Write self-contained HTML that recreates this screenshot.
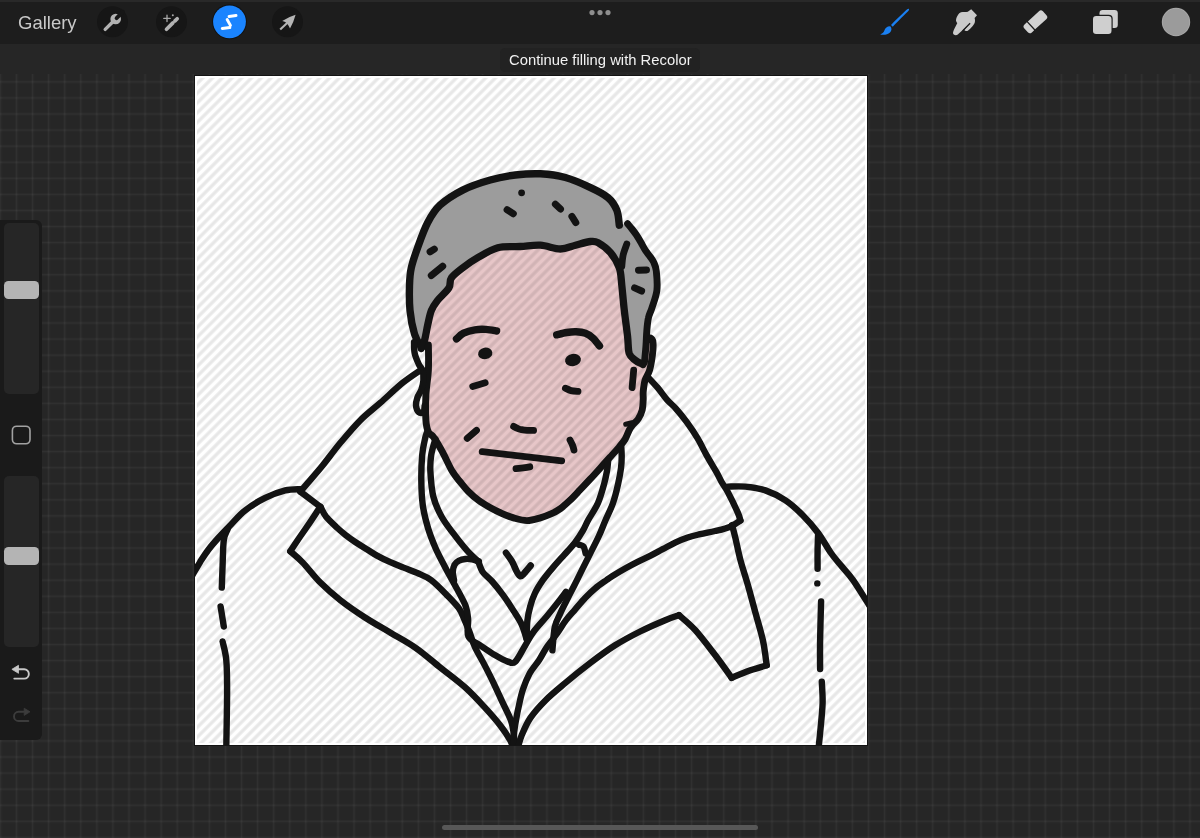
<!DOCTYPE html>
<html><head><meta charset="utf-8">
<style>
html,body{margin:0;padding:0;}
body{width:1200px;height:838px;overflow:hidden;background:#262626;position:relative;font-family:"Liberation Sans",sans-serif;}
#topbar{position:absolute;left:0;top:0;width:1200px;height:44px;background:#1d1d1d;}
#gallery{will-change:transform;position:absolute;left:17.7px;top:11.6px;font-size:18.5px;line-height:22px;color:#c9c9c9;}
#tip{position:absolute;left:500px;top:48px;width:200px;height:24px;border-radius:5px;background:#222222;color:#f2f2f2;font-size:14.8px;line-height:25.6px;text-align:center;}
#side{position:absolute;left:-6px;top:220px;width:48px;height:520px;border-radius:6px;background:#1a1a1a;}
.track{position:absolute;left:4px;width:34.5px;border-radius:5px;background:#262626;}
.knob{position:absolute;left:4px;width:34.5px;height:17.5px;border-radius:4.5px;background:#b4b4b4;}
#homebar{position:absolute;left:442px;top:825px;width:316px;height:5px;border-radius:3px;background:#575757;}
svg{position:absolute;left:0;top:0;}
</style></head><body>
<svg width="1200" height="838" viewBox="0 0 1200 838">
<defs><pattern id="gp" x="-1.075" y="80.4" width="16.075" height="16.075" patternUnits="userSpaceOnUse">
<rect x="0" y="0" width="3" height="16.075" fill="#fff" fill-opacity="0.014"/><rect x="1" y="0" width="1" height="16.075" fill="#fff" fill-opacity="0.03"/>
<rect x="0" y="0" width="16.075" height="3" fill="#fff" fill-opacity="0.014"/><rect x="0" y="1" width="16.075" height="1" fill="#fff" fill-opacity="0.03"/></pattern></defs>
<rect x="0" y="74" width="1200" height="764" fill="url(#gp)"/>
</svg>
<div id="topbar"></div><div style="position:absolute;left:0;top:0;width:1200px;height:1.5px;background:#292929"></div>
<div id="gallery">Gallery</div>
<div id="tip"><span style="will-change:transform;display:inline-block">Continue filling with Recolor</span></div>
<div id="side"></div>
<div class="track" style="top:222.5px;height:171.5px"></div>
<div class="knob" style="top:281px"></div>
<div class="track" style="top:476px;height:171px"></div>
<div class="knob" style="top:547px"></div>
<div id="homebar"></div>
<svg width="1200" height="838" viewBox="0 0 1200 838">
<defs>
<linearGradient id="sg" x1="0" y1="0" x2="0" y2="1">
<stop offset="0" stop-color="#000" stop-opacity="0.094"/><stop offset="0.14" stop-color="#000" stop-opacity="0.094"/><stop offset="0.36" stop-color="#000" stop-opacity="0"/><stop offset="0.64" stop-color="#000" stop-opacity="0"/><stop offset="0.86" stop-color="#000" stop-opacity="0.094"/><stop offset="1" stop-color="#000" stop-opacity="0.094"/></linearGradient>
<pattern id="st" width="20" height="6.9" patternUnits="userSpaceOnUse" patternTransform="translate(195 76) rotate(-45) translate(0 -0.1)">
<rect x="0" y="0" width="20" height="6.9" fill="url(#sg)"/></pattern>
<clipPath id="cv"><rect x="195" y="76" width="672" height="669"/></clipPath>
</defs>
<rect x="194" y="75" width="674" height="671" fill="#141414"/>
<rect x="195" y="76" width="672" height="669" fill="#ffffff"/>
<g clip-path="url(#cv)">
<path d="M421.3 348.5C421.8 347.2 423.4 344.4 424.5 340.5C425.6 336.6 426.5 330.4 427.6 325.4C428.8 320.4 429.7 314.6 431.4 310.4C433.1 306.2 434.7 304.2 437.6 300.4C440.5 296.6 446.6 291.6 448.9 287.8C451.2 284.0 449.1 281.1 451.4 277.8C453.7 274.5 458.3 271.2 462.7 267.8C467.1 264.4 471.8 261.1 477.7 257.7C483.6 254.3 490.7 249.6 497.8 247.7C504.9 245.8 513.2 246.9 520.3 246.5C527.4 246.1 533.7 244.8 540.4 245.2C547.1 245.6 554.5 249.0 560.4 249.0C566.2 249.0 570.5 246.4 575.5 245.2C580.5 243.9 586.8 241.9 590.5 241.5C594.2 241.1 594.7 240.8 598.0 242.7C601.3 244.6 607.0 248.5 610.5 252.7C614.0 256.9 617.4 262.4 619.3 267.8C621.2 273.2 621.0 278.2 621.8 285.3C622.6 292.4 623.3 301.8 624.3 310.4C625.3 319.0 626.8 329.5 627.6 336.7C628.4 343.9 628.0 349.5 629.2 353.4C630.5 357.3 632.8 358.2 635.1 360.1C637.4 362.0 641.7 363.8 643.0 364.5L643.0 364.5C643.5 362.1 645.2 354.1 646.0 350.0C646.8 345.9 647.3 341.8 647.6 340.1L647.6 340.1C648.1 339.8 649.5 337.6 650.4 338.0C651.3 338.4 652.7 339.6 653.0 342.5C653.3 345.4 653.0 350.5 652.4 355.1C651.8 359.7 650.8 365.9 649.6 370.1C648.4 374.3 646.2 376.5 645.1 380.1C644.0 383.8 643.5 388.7 643.2 392.0C642.9 395.3 643.4 397.0 643.2 400.0C643.0 403.0 643.0 406.8 642.2 410.0C641.4 413.2 639.8 416.5 638.2 419.0C636.6 421.5 634.0 423.2 632.5 425.1C631.0 427.0 630.4 427.8 629.2 430.1C628.0 432.4 626.9 436.3 625.2 439.1C623.5 441.9 621.6 444.1 619.1 447.1C616.6 450.1 613.3 453.6 610.1 457.1C606.9 460.6 603.4 464.5 600.1 468.2C596.8 471.9 593.5 475.6 590.1 479.2C586.8 482.8 583.4 486.3 580.0 489.9C576.6 493.5 573.0 497.5 569.7 500.6C566.4 503.7 563.5 506.4 560.4 508.6C557.3 510.8 554.4 512.4 551.0 513.9C547.6 515.4 544.3 516.8 540.3 517.9C536.3 519.0 531.5 520.6 527.0 520.6C522.5 520.6 517.8 519.1 513.6 517.9C509.4 516.7 505.6 515.1 501.6 513.3C497.6 511.5 493.3 509.3 489.5 507.2C485.7 505.1 482.4 503.3 478.8 500.6C475.2 497.9 471.2 494.3 468.1 491.2C465.0 488.1 462.8 485.1 460.1 481.8C457.4 478.5 455.0 476.0 452.1 471.1C449.2 466.2 445.7 458.0 442.7 452.4C439.7 446.8 436.4 441.1 434.0 437.7C431.6 434.3 429.8 434.8 428.4 431.9C427.0 429.0 426.3 426.3 425.9 420.2C425.5 414.1 425.5 403.5 425.9 395.1C426.3 386.7 428.0 378.4 428.4 370.0C428.8 361.6 428.4 349.2 428.4 345.0Z" fill="#e7c6c8"/>
<rect x="197" y="78" width="668" height="665" fill="url(#st)"/>
<path d="M421.3 347.5C420.2 345.2 416.4 340.2 414.5 334.0C412.6 327.8 410.8 318.5 410.0 310.4C409.2 302.3 409.3 292.4 409.5 285.3C409.7 278.2 409.9 274.1 411.3 267.8C412.7 261.5 414.9 255.2 417.6 247.7C420.3 240.2 423.9 229.8 427.6 222.7C431.4 215.6 434.2 210.5 440.1 205.1C446.0 199.7 454.4 194.3 462.7 190.1C471.0 185.9 481.4 182.5 490.2 180.0C499.0 177.5 506.9 176.0 515.3 175.0C523.7 174.0 532.0 173.4 540.4 173.8C548.8 174.2 557.0 175.2 565.4 177.5C573.8 179.8 583.4 184.2 590.5 187.6C597.6 190.9 603.6 193.8 608.0 197.6C612.4 201.3 614.9 205.5 616.8 210.1C618.7 214.7 618.9 222.7 619.3 225.2L619.3 225.2L627.6 223.6L627.6 223.6C628.3 224.5 630.5 227.1 632.0 229.0C633.5 230.9 634.8 232.6 636.3 234.8C637.8 237.1 639.5 239.9 641.0 242.5C642.5 245.1 644.1 248.3 645.6 250.6C647.1 252.9 648.7 254.6 650.0 256.5C651.3 258.4 652.6 259.6 653.6 262.0C654.6 264.4 655.8 266.3 656.3 271.0C656.8 275.7 657.6 284.2 656.9 290.3C656.2 296.4 653.3 303.3 651.9 307.9C650.5 312.5 649.2 314.1 648.4 318.0C647.5 321.9 647.2 326.2 646.8 331.0C646.4 335.8 646.3 341.5 645.9 346.7C645.5 351.9 644.7 359.4 644.5 362.0L643.0 364.5C641.7 363.8 637.4 362.0 635.1 360.1C632.8 358.2 630.5 357.3 629.2 353.4C628.0 349.5 628.4 343.9 627.6 336.7C626.8 329.5 625.3 319.0 624.3 310.4C623.3 301.8 622.6 292.4 621.8 285.3C621.0 278.2 621.2 273.2 619.3 267.8C617.4 262.4 614.0 256.9 610.5 252.7C607.0 248.5 601.3 244.6 598.0 242.7C594.7 240.8 594.2 241.1 590.5 241.5C586.8 241.9 580.5 243.9 575.5 245.2C570.5 246.4 566.2 249.0 560.4 249.0C554.5 249.0 547.1 245.6 540.4 245.2C533.7 244.8 527.4 246.1 520.3 246.5C513.2 246.9 504.9 245.8 497.8 247.7C490.7 249.6 483.6 254.3 477.7 257.7C471.8 261.1 467.1 264.4 462.7 267.8C458.3 271.2 453.7 274.5 451.4 277.8C449.1 281.1 451.2 284.0 448.9 287.8C446.6 291.6 440.5 296.6 437.6 300.4C434.7 304.2 433.1 306.2 431.4 310.4C429.7 314.6 428.8 320.4 427.6 325.4C426.5 330.4 425.6 336.6 424.5 340.5C423.4 344.4 421.8 347.2 421.3 348.5Z" fill="#9c9c9c"/>
<g fill="none" stroke="#131313" stroke-linecap="round" stroke-linejoin="round">
<path d="M421.3 347.5C420.2 345.2 416.4 340.2 414.5 334.0C412.6 327.8 410.8 318.5 410.0 310.4C409.2 302.3 409.3 292.4 409.5 285.3C409.7 278.2 409.9 274.1 411.3 267.8C412.7 261.5 414.9 255.2 417.6 247.7C420.3 240.2 423.9 229.8 427.6 222.7C431.4 215.6 434.2 210.5 440.1 205.1C446.0 199.7 454.4 194.3 462.7 190.1C471.0 185.9 481.4 182.5 490.2 180.0C499.0 177.5 506.9 176.0 515.3 175.0C523.7 174.0 532.0 173.4 540.4 173.8C548.8 174.2 557.0 175.2 565.4 177.5C573.8 179.8 583.4 184.2 590.5 187.6C597.6 190.9 603.6 193.8 608.0 197.6C612.4 201.3 614.9 205.5 616.8 210.1C618.7 214.7 618.9 222.7 619.3 225.2" stroke-width="7.4"/>
<path d="M627.6 223.6C628.3 224.5 630.5 227.1 632.0 229.0C633.5 230.9 634.8 232.6 636.3 234.8C637.8 237.1 639.5 239.9 641.0 242.5C642.5 245.1 644.1 248.3 645.6 250.6C647.1 252.9 648.7 254.6 650.0 256.5C651.3 258.4 652.6 259.6 653.6 262.0C654.6 264.4 655.8 266.3 656.3 271.0C656.8 275.7 657.6 284.2 656.9 290.3C656.2 296.4 653.3 303.3 651.9 307.9C650.5 312.5 649.2 314.1 648.4 318.0C647.5 321.9 647.2 326.2 646.8 331.0C646.4 335.8 646.3 341.5 645.9 346.7C645.5 351.9 644.7 359.4 644.5 362.0" stroke-width="6.9"/>
<path d="M643.0 364.5C641.7 363.8 637.4 362.0 635.1 360.1C632.8 358.2 630.5 357.3 629.2 353.4C628.0 349.5 628.4 343.9 627.6 336.7C626.8 329.5 625.3 319.0 624.3 310.4C623.3 301.8 622.6 292.4 621.8 285.3C621.0 278.2 621.2 273.2 619.3 267.8C617.4 262.4 614.0 256.9 610.5 252.7C607.0 248.5 601.3 244.6 598.0 242.7C594.7 240.8 594.2 241.1 590.5 241.5C586.8 241.9 580.5 243.9 575.5 245.2C570.5 246.4 566.2 249.0 560.4 249.0C554.5 249.0 547.1 245.6 540.4 245.2C533.7 244.8 527.4 246.1 520.3 246.5C513.2 246.9 504.9 245.8 497.8 247.7C490.7 249.6 483.6 254.3 477.7 257.7C471.8 261.1 467.1 264.4 462.7 267.8C458.3 271.2 453.7 274.5 451.4 277.8C449.1 281.1 451.2 284.0 448.9 287.8C446.6 291.6 440.5 296.6 437.6 300.4C434.7 304.2 433.1 306.2 431.4 310.4C429.7 314.6 428.8 320.4 427.6 325.4C426.5 330.4 425.6 336.6 424.5 340.5C423.4 344.4 421.8 347.2 421.3 348.5" stroke-width="7.3"/>
<path d="M626.8 244.0C626.2 245.9 623.9 251.4 623.1 255.2C622.3 258.9 622.0 264.6 621.8 266.5" stroke-width="6.8"/>
<path d="M428.4 345.0C428.4 349.2 428.8 361.6 428.4 370.0C428.0 378.4 426.3 386.7 425.9 395.1C425.5 403.5 425.5 414.1 425.9 420.2C426.3 426.3 427.0 429.0 428.4 431.9C429.8 434.8 431.6 434.3 434.0 437.7C436.4 441.1 439.7 446.8 442.7 452.4C445.7 458.0 449.2 466.2 452.1 471.1C455.0 476.0 457.4 478.5 460.1 481.8C462.8 485.1 465.0 488.1 468.1 491.2C471.2 494.3 475.2 497.9 478.8 500.6C482.4 503.3 485.7 505.1 489.5 507.2C493.3 509.3 497.6 511.5 501.6 513.3C505.6 515.1 509.4 516.7 513.6 517.9C517.8 519.1 522.5 520.6 527.0 520.6C531.5 520.6 536.3 519.0 540.3 517.9C544.3 516.8 547.6 515.4 551.0 513.9C554.4 512.4 557.3 510.8 560.4 508.6C563.5 506.4 566.4 503.7 569.7 500.6C573.0 497.5 576.6 493.5 580.0 489.9C583.4 486.3 586.8 482.8 590.1 479.2C593.5 475.6 596.8 471.9 600.1 468.2C603.4 464.5 606.9 460.6 610.1 457.1C613.3 453.6 616.6 450.1 619.1 447.1C621.6 444.1 623.5 441.9 625.2 439.1C626.9 436.3 628.0 432.4 629.2 430.1C630.4 427.8 631.0 427.0 632.5 425.1C634.0 423.2 636.6 421.5 638.2 419.0C639.8 416.5 641.4 413.2 642.2 410.0C643.0 406.8 643.0 403.0 643.2 400.0C643.4 397.0 642.9 395.3 643.2 392.0C643.5 388.7 644.0 383.8 645.1 380.1C646.2 376.5 648.4 374.3 649.6 370.1C650.8 365.9 651.8 359.7 652.4 355.1C653.0 350.5 653.3 345.4 653.0 342.5C652.7 339.6 651.3 338.4 650.4 338.0C649.5 337.6 648.1 339.8 647.6 340.1" stroke-width="6.9"/>
<path d="M414.0 342.1C414.1 344.0 413.9 349.7 414.7 353.4C415.5 357.1 417.4 361.2 418.7 364.1C420.0 367.0 421.9 368.1 422.7 370.8C423.5 373.5 423.6 377.1 423.4 380.2C423.2 383.3 422.4 386.6 421.4 389.5C420.4 392.4 418.3 394.8 417.4 397.5C416.5 400.2 415.8 403.2 416.0 405.6C416.2 408.1 417.5 411.1 418.7 412.2C419.9 413.3 422.4 413.3 423.4 412.2C424.4 411.1 424.5 406.7 424.7 405.6" stroke-width="6.4"/>
<path d="M625.7 424.3L632.0 422.8" stroke-width="5"/>
<path d="M456.5 338.9C457.7 337.9 460.4 334.7 463.5 333.2C466.6 331.7 471.1 330.4 474.9 329.8C478.6 329.2 482.4 329.2 486.0 329.4C489.6 329.6 494.8 330.7 496.6 331.0" stroke-width="7.4"/>
<path d="M556.7 334.8C558.4 334.4 563.5 333.0 566.7 332.5C569.9 332.0 573.0 331.7 576.1 331.8C579.2 331.9 582.7 332.2 585.5 333.2C588.3 334.2 590.5 335.8 592.8 337.9C595.1 340.0 598.4 344.6 599.5 345.9" stroke-width="7.4"/>
<path d="M472.7 386.4L485.2 382.7" stroke-width="6.8"/>
<path d="M565.4 388.2C566.3 388.6 568.9 390.1 571.0 390.6C573.1 391.1 576.8 391.3 578.0 391.4" stroke-width="6.8"/>
<path d="M467.2 438.3L476.5 430.3" stroke-width="6.8"/>
<path d="M570.0 440.1C570.4 440.9 571.8 443.4 572.5 445.1C573.2 446.8 573.8 449.3 574.0 450.1" stroke-width="6.8"/>
<path d="M513.6 426.4C514.2 426.7 516.2 427.8 517.5 428.4C518.8 428.9 520.0 429.4 521.6 429.7C523.2 430.0 525.0 430.3 527.0 430.4C529.0 430.5 532.5 430.4 533.6 430.4" stroke-width="6.8"/>
<path d="M482.2 451.6L561.7 460.9" stroke-width="6.8"/>
<path d="M516.0 468.6C517.2 468.5 520.7 468.1 523.0 467.8C525.3 467.5 528.7 467.0 529.8 466.8" stroke-width="6.8"/>
<path d="M633.7 370.1L632.1 387.6" stroke-width="6.8"/>
<path d="M507.1 209.8L513.3 213.7" stroke-width="7"/>
<path d="M555.4 204.2L560.5 209.0" stroke-width="7"/>
<path d="M571.9 216.4L575.8 222.6" stroke-width="7"/>
<path d="M430.1 251.8L434.3 249.1" stroke-width="7"/>
<path d="M431.3 275.5L442.7 266.3" stroke-width="7"/>
<path d="M638.5 270.2L646.5 269.9" stroke-width="7"/>
<path d="M634.6 287.9L641.6 291.0" stroke-width="7"/>
<path d="M506.0 552.8C507.0 554.2 510.2 558.3 512.0 561.4C513.8 564.5 515.3 569.0 516.7 571.5C518.1 574.0 519.1 576.0 520.3 576.3C521.5 576.6 522.3 575.3 524.0 573.5C525.7 571.7 529.6 566.8 530.7 565.5" stroke-width="6.6"/>
<path d="M420.6 370.1C417.7 372.2 409.7 377.2 403.0 382.6C396.3 388.0 387.6 396.4 380.5 402.7C373.4 409.0 367.1 413.5 360.4 420.2C353.7 426.9 346.7 435.3 340.4 442.8C334.1 450.3 328.2 458.6 322.8 465.3C317.4 472.0 311.6 478.5 307.8 482.9C304.1 487.3 301.6 490.2 300.3 491.6" stroke-width="6.4"/>
<path d="M300.3 489.1C297.8 489.3 291.1 488.9 285.2 490.4C279.3 491.9 271.9 494.6 265.2 497.9C258.5 501.2 250.9 505.8 245.1 510.4C239.2 515.0 234.5 521.0 230.1 525.5C225.7 530.0 222.4 533.4 218.7 537.5C215.0 541.6 211.1 546.1 208.0 550.2C204.9 554.3 202.6 558.1 200.0 562.2C197.4 566.3 193.8 572.9 192.5 575.0" stroke-width="6.4"/>
<path d="M300.3 491.6L320.3 506.7" stroke-width="6.4"/>
<path d="M320.3 506.7C318.2 509.8 311.6 520.0 307.8 525.5C304.1 531.0 300.7 535.7 297.8 540.0C294.9 544.3 291.6 549.4 290.3 551.3" stroke-width="6.4"/>
<path d="M290.3 551.3C292.4 553.2 297.8 557.4 302.8 562.6C307.8 567.8 314.0 576.3 320.3 582.6C326.6 588.9 332.9 594.4 340.4 600.2C347.9 606.1 357.0 612.3 365.4 617.7C373.8 623.1 382.1 627.7 390.5 632.7C398.9 637.7 407.2 641.9 415.6 647.8C424.0 653.6 432.2 661.1 440.6 667.8C449.0 674.5 458.3 681.2 465.7 687.9C473.1 694.6 479.4 701.6 485.2 707.9C491.0 714.2 496.1 720.1 500.3 725.5C504.5 730.9 508.2 736.8 510.3 740.5C512.4 744.2 512.5 746.8 513.0 748.0" stroke-width="6.4"/>
<path d="M320.8 507.4C321.7 509.0 323.4 513.4 326.1 516.8C328.8 520.1 333.5 524.4 336.8 527.5C340.1 530.6 343.1 533.0 346.2 535.5C349.3 538.0 352.2 540.0 355.6 542.2C359.0 544.4 362.7 546.7 366.3 548.9C369.9 551.1 373.0 553.4 377.0 555.6C381.0 557.8 385.9 560.2 390.3 562.2C394.8 564.2 399.2 565.8 403.7 567.6C408.2 569.4 412.6 570.8 417.1 572.9C421.7 575.0 426.1 576.3 431.0 580.0C435.9 583.7 442.1 590.2 446.7 594.9C451.3 599.6 455.9 604.2 458.8 608.2C461.7 612.2 462.3 614.9 464.1 618.9C465.9 622.9 467.7 627.4 469.5 632.0C471.3 636.6 472.4 641.4 474.8 646.7C477.2 652.1 481.0 658.1 484.1 664.1C487.2 670.1 490.4 676.3 493.5 682.8C496.6 689.3 499.9 696.6 502.8 702.9C505.7 709.1 509.1 715.4 510.9 720.3C512.7 725.1 512.9 727.4 513.5 732.0C514.1 736.6 514.3 745.3 514.5 748.0" stroke-width="6.4"/>
<path d="M227.6 529.2C227.0 531.0 224.6 534.0 223.8 540.0C223.0 546.0 222.9 557.2 222.6 565.1C222.3 573.0 221.9 583.9 221.8 587.6" stroke-width="6.4"/>
<path d="M220.6 606.4L223.8 626.5" stroke-width="6.4"/>
<path d="M222.6 641.5C223.2 644.6 225.6 652.1 226.3 660.3C227.1 668.4 227.1 675.8 227.1 690.4C227.1 705.0 226.4 738.4 226.3 748.0" stroke-width="6.4"/>
<path d="M426.8 432.7C426.5 433.6 425.9 434.7 425.1 438.4C424.3 442.1 422.8 448.1 422.2 455.1C421.6 462.1 421.2 471.8 421.3 480.2C421.4 488.6 421.7 497.3 422.8 505.3C423.9 513.3 425.9 520.9 428.0 528.0C430.1 535.1 432.8 541.7 435.5 548.0C438.2 554.3 442.0 561.1 444.5 566.0C447.0 570.9 448.3 573.1 450.7 577.5C453.1 581.9 456.3 587.5 458.8 592.2C461.3 596.9 463.9 601.2 465.5 605.6C467.1 610.0 467.6 613.8 468.1 618.9C468.6 624.0 466.4 632.1 468.4 636.5C470.4 640.9 475.7 642.2 480.2 645.3C484.7 648.4 490.7 652.6 495.3 655.3C499.9 658.0 504.5 660.5 507.8 661.6C511.1 662.7 512.4 664.3 515.3 661.6C518.2 658.9 522.3 650.2 525.3 645.3C528.3 640.4 529.8 636.8 533.4 632.0C537.0 627.2 542.8 621.1 546.8 616.3C550.8 611.4 554.3 607.0 557.5 602.9C560.7 598.8 564.6 593.6 566.0 591.8" stroke-width="6.4"/>
<path d="M435.4 439.0C434.7 441.7 432.0 449.6 431.2 455.1C430.4 460.6 430.0 464.8 430.4 471.8C430.8 478.8 431.5 489.4 433.4 496.9C435.3 504.4 438.4 510.9 441.8 517.0C445.2 523.1 449.3 528.1 453.5 533.7C457.7 539.3 462.7 545.7 466.9 550.4C471.1 555.1 476.8 560.1 478.8 562.0" stroke-width="6.4"/>
<path d="M478.8 561.4C477.7 561.1 474.3 559.8 472.1 559.4C469.9 559.0 467.7 558.8 465.5 559.0C463.3 559.2 460.6 559.8 458.8 560.8C457.0 561.8 455.5 562.9 454.5 564.8C453.5 566.7 452.9 569.5 452.8 572.1C452.7 574.7 453.9 578.9 454.1 580.2" stroke-width="6.4"/>
<path d="M478.8 562.8C479.1 563.7 480.0 566.4 480.8 568.1C481.6 569.8 481.6 570.8 483.5 573.0C485.4 575.2 489.0 577.9 492.2 581.5C495.4 585.1 499.3 590.0 502.9 594.9C506.5 599.8 510.5 606.0 513.6 610.9C516.7 615.8 519.4 619.6 521.6 624.3C523.8 629.0 525.8 636.5 526.6 639.0" stroke-width="6.4"/>
<path d="M608.1 461.2C607.9 462.7 607.8 466.4 607.1 470.2C606.4 474.0 605.6 478.5 604.1 484.0C602.6 489.5 600.6 497.0 598.0 503.0C595.4 509.0 590.7 515.4 588.2 520.0C585.7 524.6 585.1 526.9 582.9 530.7C580.7 534.5 578.0 538.7 574.9 542.7C571.8 546.7 567.8 550.8 564.2 554.8C560.6 558.8 557.1 562.6 553.5 566.8C549.9 571.0 545.9 575.8 542.8 580.2C539.7 584.7 536.9 589.0 534.8 593.5C532.7 598.0 531.3 602.4 530.1 606.9C528.9 611.4 528.0 614.9 527.4 620.3C526.8 625.6 526.7 635.9 526.6 639.0" stroke-width="6.4"/>
<path d="M578.9 544.7C579.7 545.0 582.5 545.2 583.6 546.7C584.7 548.2 585.3 552.3 585.6 553.4" stroke-width="6.4"/>
<path d="M621.2 446.1C621.3 447.8 621.7 452.4 621.7 456.1C621.7 459.8 621.6 463.6 621.0 468.2C620.4 472.8 619.4 478.2 618.1 484.0C616.8 489.8 615.1 497.0 613.0 503.0C610.9 509.0 608.0 514.5 605.6 520.0C603.2 525.5 601.4 530.6 598.9 536.0C596.4 541.4 593.6 546.8 590.9 552.1C588.2 557.5 585.6 562.8 582.9 568.1C580.2 573.5 577.6 578.9 574.9 584.2C572.2 589.6 569.2 595.3 566.8 600.2C564.3 605.1 562.2 609.1 560.2 613.6C558.2 618.1 556.1 620.9 554.8 627.0C553.5 633.1 552.8 646.4 552.4 650.3" stroke-width="6.4"/>
<path d="M648.4 377.6C649.9 379.2 654.3 383.8 657.4 387.4C660.5 391.0 663.6 395.8 666.7 399.4C669.8 403.0 672.8 405.0 676.1 408.8C679.5 412.6 683.2 417.2 686.8 422.1C690.4 427.0 694.2 432.6 697.5 438.2C700.8 443.8 703.7 450.0 706.8 455.6C709.9 461.2 713.7 467.2 716.2 471.6C718.7 476.0 719.7 478.6 721.6 482.0C723.5 485.4 725.1 486.9 727.8 492.0C730.5 497.1 735.8 508.1 737.9 512.9C740.0 517.6 740.0 519.2 740.4 520.5" stroke-width="6.4"/>
<path d="M740.4 520.5C738.7 521.5 734.6 525.0 730.4 526.7C726.2 528.5 720.1 529.8 715.0 531.0C709.9 532.2 704.5 533.1 700.0 534.2C695.5 535.3 691.8 536.1 687.7 537.5C683.6 538.9 679.4 540.6 675.2 542.6C671.0 544.6 666.9 547.0 662.7 549.2C658.5 551.4 654.3 553.8 650.1 555.9C645.9 558.0 641.8 559.7 637.6 561.8C633.4 563.9 629.3 566.1 625.1 568.5C620.9 570.9 615.6 574.1 612.5 576.0C609.4 577.9 609.5 577.9 606.6 580.0C603.7 582.1 598.7 585.5 595.1 588.5C591.5 591.5 588.5 594.5 585.1 598.0C581.8 601.5 578.2 605.9 575.0 609.6C571.8 613.3 568.6 616.7 566.0 620.1C563.4 623.5 561.4 627.0 559.3 630.1C557.2 633.2 555.6 635.4 553.4 638.5C551.2 641.6 548.3 644.9 545.9 648.5C543.5 652.1 541.9 655.8 539.2 660.0C536.5 664.2 532.3 668.6 529.6 673.5C526.9 678.4 524.7 684.1 522.9 689.5C521.1 694.9 520.0 700.7 518.9 705.6C517.8 710.5 517.0 714.5 516.2 718.9C515.4 723.3 514.7 727.1 514.2 732.0C513.8 736.9 513.6 745.3 513.5 748.0" stroke-width="6.4"/>
<path d="M732.0 525.0C732.6 527.2 734.0 532.2 735.4 538.0C736.8 543.8 738.3 552.1 740.4 560.0C742.5 567.9 745.4 576.3 747.9 585.1C750.4 593.9 752.9 603.5 755.4 612.7C757.9 621.9 761.0 631.5 762.9 640.3C764.8 649.1 766.1 661.1 766.7 665.3" stroke-width="6.4"/>
<path d="M766.7 665.3C764.0 666.1 756.2 668.2 750.4 670.3C744.5 672.4 734.7 676.5 731.6 677.8" stroke-width="6.4"/>
<path d="M731.6 677.8C728.9 674.0 721.3 663.2 715.3 655.3C709.2 647.4 701.3 636.9 695.3 630.2C689.2 623.5 681.7 617.7 679.0 615.2" stroke-width="6.4"/>
<path d="M679.0 615.2C676.7 616.0 671.7 617.5 665.2 620.2C658.7 622.9 648.5 627.3 640.1 631.5C631.8 635.7 623.4 640.1 615.1 645.3C606.8 650.5 598.8 656.5 590.5 662.8C582.2 669.1 572.9 676.6 565.4 682.9C557.9 689.2 551.2 694.6 545.4 700.4C539.6 706.2 534.4 712.0 530.4 717.9C526.4 723.8 523.7 730.5 521.6 735.5C519.5 740.5 518.4 745.9 517.8 748.0" stroke-width="6.4"/>
<path d="M727.8 486.6C730.7 486.6 739.1 486.0 745.4 486.6C751.7 487.2 758.7 488.1 765.4 490.4C772.1 492.7 779.2 496.2 785.5 500.4C791.8 504.6 797.6 510.0 803.0 515.4C808.4 520.8 813.5 526.8 818.1 533.0C822.7 539.2 826.9 547.1 830.6 552.5C834.4 557.9 836.9 560.5 840.6 565.1C844.4 569.7 848.4 573.5 853.1 580.1C857.8 586.8 866.4 600.9 869.0 605.0" stroke-width="6.4"/>
<path d="M818.1 534.2C818.0 536.8 817.7 544.2 817.6 550.0C817.5 555.8 817.6 565.7 817.6 568.8" stroke-width="6.4"/>
<path d="M821.1 601.4C820.9 607.9 820.3 629.0 820.1 640.3C819.9 651.6 820.1 664.3 820.1 669.1" stroke-width="6.4"/>
<path d="M821.8 681.6C821.9 685.1 822.8 695.2 822.6 702.9C822.4 710.6 821.3 720.5 820.6 728.0C819.9 735.5 818.9 744.7 818.6 748.0" stroke-width="6.4"/>
</g>
<circle cx="521.6" cy="192.8" r="3.4" fill="#131313"/>
<circle cx="817.3" cy="583.4" r="3.2" fill="#131313"/>
<ellipse cx="485.2" cy="353.4" rx="7.2" ry="5.8" transform="rotate(-10 485.2 353.4)" fill="#131313"/>
<ellipse cx="573" cy="360" rx="8" ry="6.2" transform="rotate(-10 573 360)" fill="#131313"/>
</g>
<!-- ICONS -->
<circle cx="592" cy="12.6" r="2.6" fill="#8e8e8e"/><circle cx="600" cy="12.6" r="2.6" fill="#8e8e8e"/><circle cx="608" cy="12.6" r="2.6" fill="#8e8e8e"/>
<!-- wrench -->
<circle cx="112.5" cy="21.8" r="15.5" fill="#161616"/>
<path d="M105.2 29.4L113.4 21.2" stroke="#b2b2b2" stroke-width="3.4" stroke-linecap="round" fill="none"/>
<circle cx="115.7" cy="19" r="5.3" fill="#b2b2b2"/>
<path d="M116.6 18.1L123 11.7" stroke="#161616" stroke-width="3.9" stroke-linecap="round" fill="none"/>
<!-- wand -->
<circle cx="171.5" cy="21.8" r="15.5" fill="#161616"/>
<g fill="none" stroke="#b2b2b2" stroke-linecap="round">
<path d="M166.5 29.2L172.9 22.9" stroke-width="3.7"/>
<path d="M175 20.9L177.2 18.7" stroke-width="3.7"/>
<path d="M167 15.2V21.6M163.8 18.4H170.2" stroke-width="1.3" stroke="#a8a8a8"/>
</g>
<circle cx="172.8" cy="15.2" r="1" fill="#a8a8a8"/>
<!-- S select -->
<circle cx="229.5" cy="21.8" r="17.4" fill="#121212"/><circle cx="229.5" cy="21.8" r="16.4" fill="#1a84ff"/>
<g fill="none" stroke="#fff" stroke-linecap="round" stroke-width="3">
<path d="M229.1 16.5L236 15.5"/><path d="M227.2 19.6L230.4 25.4"/><path d="M222.3 28.4L229.8 27.6"/>
</g>
<!-- arrow -->
<circle cx="287.5" cy="21.8" r="15.5" fill="#161616"/>
<path d="M295.6 14.7Q288.5 16.8 282.2 21Q284.8 21.6 286.9 23.2Q288.6 25.4 290 28.5Q293.8 21.8 295.6 14.7Z" fill="#b5b5b5"/>
<path d="M287.4 22.8L280.2 29.6" stroke="#b5b5b5" stroke-width="2.1" fill="none"/>
<!-- brush -->
<path d="M908.9 8.9C908.2 8.4 906.6 9.6 905 11.2C900.5 15.6 894.6 21.2 891 24.9L892.8 26.7C896.6 22.9 903 16.2 906.8 12.6C908.4 11 909.6 9.6 908.9 8.9Z" fill="#1a80f2"/>
<path d="M890.3 26.2C887.4 26 885.2 28 884.4 30.4C883.6 32.6 882 33.6 880.2 34.4C883.4 35.4 887.6 34.8 890 32.4C891.8 30.6 892 27.8 890.3 26.2Z" fill="#1a80f2"/>
<!-- smudge -->
<path d="M953.1 33.6C952.6 31.6 956.4 25 957.3 23.1C956.6 22 955.8 21 956 19.9C956.3 18 957 16.4 957.8 15.2C958.6 13.8 959.8 12.6 961 12.3C963 11.8 966 12.2 967.8 11.8L971.2 9.2L977 15.2L974.6 18.1C975 19.5 975.2 20.8 974.9 22C974.5 23.6 973.5 25 972.5 26.2C971 28 969.4 29.6 967.8 30.7C966.6 31.4 965 31 964.4 29.9L970.1 23.2L957.8 34.6C956.4 35.8 953.6 35.4 953.1 33.6Z" fill="#cacaca"/>
<path d="M970.1 23.2L962.6 30.9" stroke="#1d1d1d" stroke-width="1.3" fill="none"/>
<!-- eraser -->
<g transform="translate(1035.4 21.8) rotate(-42.5)">
<path d="M-12.6 -2.6A2.8 2.8 0 0 1 -9.8 -5.4H-6.6V5.4H-9.8A2.8 2.8 0 0 1 -12.6 2.6Z" fill="#d2d2d2"/>
<path d="M-5.3 -5.4H9.8A2.8 2.8 0 0 1 12.6 -2.6V2.6A2.8 2.8 0 0 1 9.8 5.4H-5.3Z" fill="#d2d2d2"/>
</g>
<!-- layers -->
<rect x="1099.5" y="10" width="18.3" height="18" rx="3.2" fill="#cfcfcf"/>
<rect x="1091.8" y="14.8" width="20.9" height="20.4" rx="4" fill="#1d1d1d"/>
<rect x="1093" y="16" width="18.5" height="18" rx="3.2" fill="#cfcfcf"/>
<!-- color -->
<circle cx="1176" cy="22" r="14.2" fill="#a6a6a6"/><circle cx="1176" cy="22" r="13.2" fill="#9b9b9b"/>
<!-- sidebar icons -->
<rect x="12.4" y="426.2" width="17.6" height="17.6" rx="4.2" fill="none" stroke="#a2a2a2" stroke-width="1.6"/>
<g fill="none" stroke="#c8c8c8" stroke-width="1.9" stroke-linecap="round" stroke-linejoin="round">
<path d="M18.5 669.3H24.2A4.65 4.65 0 0 1 24.2 678.6H14.3"/>
</g>
<path d="M11.9 669.3L18.5 665.3V673.3Z" fill="#c8c8c8" stroke="#c8c8c8" stroke-width="0.8" stroke-linejoin="round"/>
<g fill="none" stroke="#3c3c3c" stroke-width="1.9" stroke-linecap="round" stroke-linejoin="round">
<path d="M24.2 711.8H18.6A4.6 4.6 0 0 0 18.6 721H28.4"/>
</g>
<path d="M30 711.8L24.2 708.2V715.4Z" fill="#3c3c3c" stroke="#3c3c3c" stroke-width="0.8" stroke-linejoin="round"/>
</svg>
</body></html>
